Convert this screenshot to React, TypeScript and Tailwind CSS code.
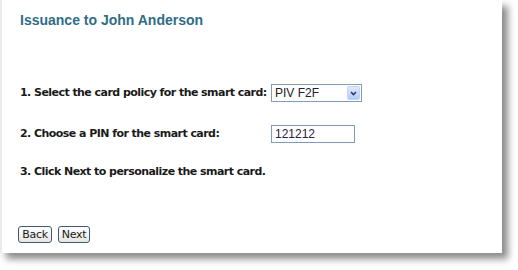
import React from "react";

export default function App() {
  return (
    <div className="w-[518px] h-[270px] bg-white overflow-hidden">
      <div className="w-[502px] h-[253px] bg-white border-l-2 border-[#ececec] shadow-[6px_6px_7px_rgba(0,0,0,0.45)] flex flex-col pl-[18px]">
        <div className="mt-[12px] leading-[16px] text-[14px] font-bold text-[#2f6d85] [font-family:'Liberation_Sans',Arial,sans-serif]">
          Issuance to John Anderson
        </div>
        <div className="mt-[56px] flex flex-col [font-family:'DejaVu_Sans',Verdana,sans-serif] text-[11px] font-bold tracking-[-0.55px] text-[#1a1a1a]">
          <div className="flex items-center h-[18px]">
            <div className="w-[251px] whitespace-nowrap">1. Select the card policy for the smart card:</div>
            <div className="w-[91px] h-[18px] border border-[#7f9db9] flex items-center justify-between pl-[3px] pr-[1px] bg-white tracking-normal">
              <span className="font-normal text-[12px] [font-family:'Liberation_Sans',Arial,sans-serif] text-[#222]">PIV F2F</span>
              <span className="w-[13px] h-[14px] rounded-[2px] bg-gradient-to-b from-[#dfe8fd] to-[#b9c9f3] border border-[#c3d1f6] flex items-center justify-center">
                <svg width="7" height="5" viewBox="0 0 7 5">
                  <path d="M1 1 L3.5 3.5 L6 1" fill="none" stroke="#233b7a" strokeWidth="1.6" />
                </svg>
              </span>
            </div>
          </div>
          <div className="flex items-center h-[18px] mt-[23px]">
            <div className="w-[251px] whitespace-nowrap">2. Choose a PIN for the smart card:</div>
            <div className="w-[84px] h-[18px] border border-[#7f9db9] flex items-center pl-[3px] bg-white tracking-normal">
              <span className="font-normal text-[12px] [font-family:'Liberation_Sans',Arial,sans-serif] text-[#2a2040]">121212</span>
            </div>
          </div>
          <div className="flex items-center h-[18px] mt-[20px] whitespace-nowrap">
            3. Click Next to personalize the smart card.
          </div>
        </div>
        <div className="mt-[45px] -ml-[2px] flex gap-[6px] [font-family:'DejaVu_Sans',Verdana,sans-serif] text-[11px] tracking-[-0.3px] text-[#1a1a1a]">
          <button className="h-[17px] w-[34px] rounded-[3px] border border-[#3d5a7a] bg-gradient-to-b from-white to-[#e6e6e0] leading-[15px] flex items-center justify-center">Back</button>
          <button className="h-[17px] w-[32px] rounded-[3px] border border-[#3d5a7a] bg-gradient-to-b from-white to-[#e6e6e0] leading-[15px] flex items-center justify-center">Next</button>
        </div>
      </div>
    </div>
  );
}
